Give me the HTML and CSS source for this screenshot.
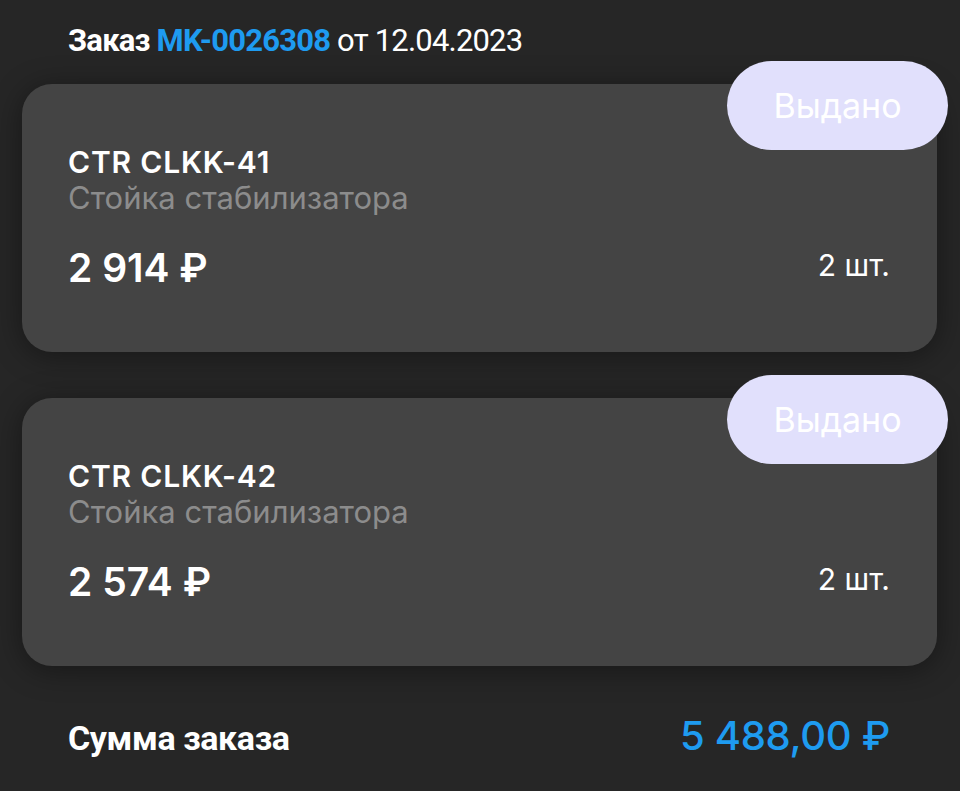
FILE: index.html
```html
<!DOCTYPE html>
<html lang="ru">
<head>
  <meta charset="UTF-8" />
  <meta name="viewport" content="width=device-width, initial-scale=1.0"/>
  <title>Заказ MK-0026308</title>
  <link rel="stylesheet" href="styles.css">
</head>
<body>

  <div class="order">
    <h1 class="order-title">Заказ <span class="order-num">MK-0026308</span> <span class="order-date">от 12.04.2023</span></h1>

    <!-- Items -->
    <div class="item">
      <div class="badge">Выдано</div>
      <div class="item-code">CTR CLKK-41</div>
      <div class="item-name">Стойка стабилизатора</div>
      <div class="item-row">
        <span class="item-price">2 914 ₽</span>
        <span class="item-qty">2 шт.</span>
      </div>
    </div>

    <div class="item">
      <div class="badge">Выдано</div>
      <div class="item-code">CTR CLKK-42</div>
      <div class="item-name">Стойка стабилизатора</div>
      <div class="item-row">
        <span class="item-price">2 574 ₽</span>
        <span class="item-qty">2 шт.</span>
      </div>
    </div>

    <!-- Total -->
    <div class="total">
      <span class="total-label">Сумма заказа</span>
      <span class="total-sum">5 488,00 ₽</span>
    </div>
  </div>

</body>
</html>
```

FILE: styles.css
```css
* {
  box-sizing: border-box;
}
body {
  margin: 0;
  background: #262626;
  font-family: Inter, Roboto, sans-serif;
  color: #fff;
  min-height: 100vh;
}
.order {
  padding: 24px 23px 0 22px;
}
.order-title {
  margin: 0 0 26px 46px;
  font-family: Roboto, sans-serif;
  font-size: 31px;
  font-weight: 700;
  line-height: 34px;
  letter-spacing: -0.8px;
}
.order-num {
  color: #1e9bf0;
}
.order-date {
  font-weight: 400;
}
.item {
  position: relative;
  background: #444444;
  border-radius: 30px;
  padding: 61px 47px 0 46px;
  height: 268px;
  margin-bottom: 46px;
  box-shadow: 0 4px 30px rgba(0, 0, 0, 0.4);
}
.badge {
  position: absolute;
  top: -23px;
  right: -11px;
  width: 221px;
  height: 89px;
  border-radius: 45px;
  background: #e1e0fc;
  color: #fff;
  font-size: 34px;
  display: flex;
  align-items: center;
  justify-content: center;
}
.item-code {
  font-size: 30px;
  font-weight: 600;
  line-height: 34px;
  letter-spacing: 0.8px;
}
.item-name {
  color: #8c8c8c;
  font-size: 31px;
  line-height: 38px;
}
.item-row {
  display: flex;
  justify-content: space-between;
  align-items: center;
  margin-top: 28px;
}
.item-price {
  font-size: 39px;
  font-weight: 600;
  line-height: 46px;
}
.item-qty {
  font-size: 30px;
  line-height: 36px;
  margin-top: -6px;
}
.total {
  display: flex;
  justify-content: space-between;
  align-items: baseline;
  padding: 0 47px 0 46px;
}
.total-label {
  font-family: Roboto, sans-serif;
  font-size: 34px;
  font-weight: 700;
  letter-spacing: -0.4px;
}
.total-sum {
  color: #1e9bf0;
  font-size: 40px;
  font-weight: 500;
  line-height: 48px;
  letter-spacing: -0.3px;
}
```
